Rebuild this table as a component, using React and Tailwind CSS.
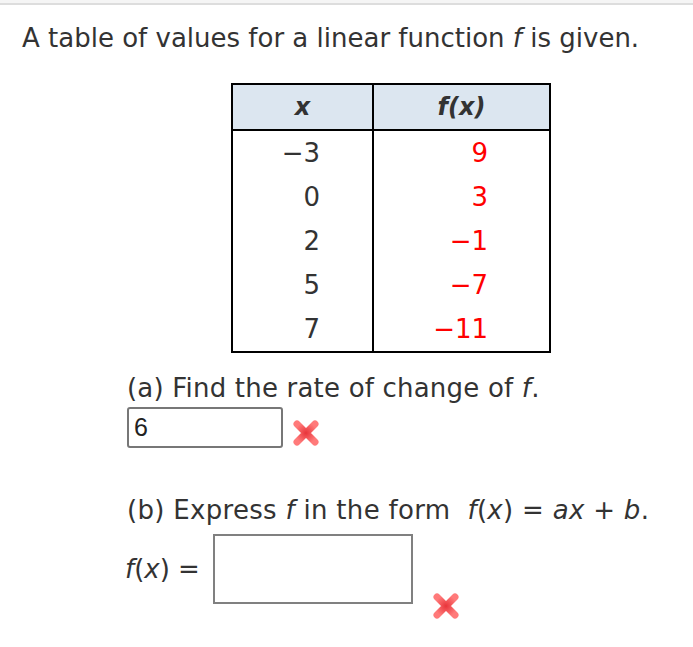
import React from 'react';

const rows = [
  { x: '−3', fx: '9' },
  { x: '0', fx: '3' },
  { x: '2', fx: '−1' },
  { x: '5', fx: '−7' },
  { x: '7', fx: '−11' },
];

// red "incorrect" mark next to an answer box
function WrongMark({ className }) {
  return (
    <svg className={className} width="28" height="28" viewBox="0 0 28 28">
      <defs>
        <radialGradient id="xg" cx="50%" cy="50%" r="60%">
          <stop offset="0%" stopColor="#e8343a" />
          <stop offset="100%" stopColor="#ff7a7a" />
        </radialGradient>
      </defs>
      <path d="M5 5 L23 23 M23 5 L5 23" stroke="url(#xg)" strokeWidth="7" strokeLinecap="round" />
    </svg>
  );
}

export default function App() {
  return (
    <div className="w-[693px] h-[647px] bg-white font-['DejaVu_Sans',sans-serif] text-[#333] overflow-hidden">
      <div className="h-[3px] bg-[#f5f5f5]" />
      <div className="h-[2px] bg-[#dddddd]" />

      <p className="pl-[22px] pt-[16px] text-[26px] leading-[34px]">
        A table of values for a linear function <i>f</i> is given.
      </p>

      <div className="pl-[231px] mt-[28px]">
        <div className="w-[320px] border-2 border-black">
          <div className="flex h-[46px] bg-[#dce6f0] border-b-2 border-black">
            <div className="w-[141px] border-r-2 border-black flex items-center justify-center text-[24px] font-bold italic">x</div>
            <div className="flex-1 flex items-center justify-center text-[24px] font-bold italic">f(x)</div>
          </div>
          {rows.map(r => (
            <div key={r.x} className="flex h-[44px] text-[26px]">
              <div className="w-[141px] border-r-2 border-black flex items-center justify-end pr-[52px]">{r.x}</div>
              <div className="flex-1 flex items-center justify-end pr-[61px] text-[#ff0000]">{r.fx}</div>
            </div>
          ))}
        </div>
      </div>

      <div className="pl-[127px] mt-[18px]">
        <p className="text-[26px] leading-[34px] tracking-[0.2px]">
          (a) Find the rate of change of <i>f</i>.
        </p>
        <div className="flex items-center mt-[2px]">
          <div className="w-[156px] h-[41px] border-2 border-[#777] rounded-[3px] flex items-center pl-[5px] font-['Liberation_Sans',sans-serif] text-[25px] text-[#222]">
            6
          </div>
          <WrongMark className="ml-[9px] mt-[10px]" />
        </div>

        <p className="mt-[45px] text-[26px] leading-[34px] tracking-[0.3px]">
          (b) Express <i>f</i> in the form&nbsp;&nbsp;<i>f</i>(<i>x</i>) = <i>ax</i> + <i>b</i>.
        </p>
        <div className="flex items-start mt-[7px] -ml-[2px]">
          <span className="text-[26px] leading-[70px] mr-[13px]">
            <i>f</i>(<i>x</i>) =
          </span>
          <div className="w-[200px] h-[70px] border-2 border-[#808080]" />
          <WrongMark className="ml-[19px] mt-[58px]" />
        </div>
      </div>
    </div>
  );
}
